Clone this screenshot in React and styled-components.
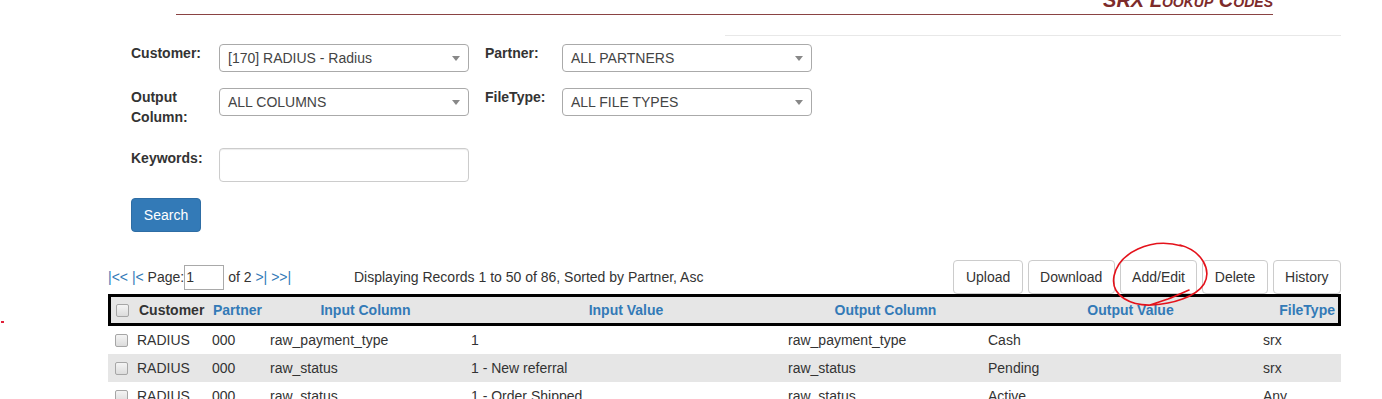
import React from 'react';
import styled, { createGlobalStyle } from 'styled-components';

const Global = createGlobalStyle`
  html, body { margin: 0; padding: 0; background: #fff; }
  body {
    font-family: "Liberation Sans", Arial, Helvetica, sans-serif;
    font-size: 14px;
    line-height: 20px;
    color: #333;
  }
  * { box-sizing: border-box; }
`;

const Page = styled.div`
  position: relative;
  width: 1382px;
  height: 399px;
  overflow: hidden;
`;

const TitleBar = styled.div`
  margin-left: 176px;
  width: 1097px;
  height: 15px;
  border-bottom: 1px solid #8a4343;
  display: flex;
  justify-content: flex-end;
  align-items: flex-end;
`;

const Title = styled.h1`
  margin: 0 0 4px 0;
  font-size: 20px;
  line-height: 20px;
  font-weight: bold;
  font-style: italic;
  font-variant: small-caps;
  color: #7d2b2b;
  white-space: nowrap;
`;

const Divider = styled.div`
  margin: 20px 0 0 725px;
  width: 616px;
  border-top: 1px solid #e8e8e8;
`;

const Form = styled.div`
  padding: 8px 0 0 131px;
`;

const FormRow = styled.div`
  display: flex;
  align-items: flex-start;
  margin-top: ${p => p.$mt || 0}px;
`;

const Label = styled.label`
  display: block;
  width: ${p => p.$w}px;
  margin-left: ${p => p.$ml || 0}px;
  margin-top: ${p => (p.$top != null ? p.$top : -1)}px;
  font-weight: bold;
  line-height: 20px;
  color: #333;
`;

const SelectBox = styled.div`
  position: relative;
  width: 250px;
  height: 28px;
  border: 1px solid #aaa;
  border-radius: 4px;
  padding: 0 8px;
  line-height: 26px;
  color: #444;
  background: #fff;
  white-space: nowrap;
  &::after {
    content: "";
    position: absolute;
    right: 8px;
    top: 11px;
    border-top: 5px solid #888;
    border-left: 4px solid transparent;
    border-right: 4px solid transparent;
  }
`;

const TextInput = styled.div`
  width: 250px;
  height: 34px;
  border: 1px solid #ccc;
  border-radius: 4px;
  background: #fff;
  box-shadow: inset 0 1px 1px rgba(0,0,0,0.075);
`;

const PrimaryButton = styled.button`
  display: block;
  margin-top: 16px;
  width: 70px;
  height: 34px;
  padding: 0;
  font-family: inherit;
  font-size: 14px;
  color: #fff;
  background: #337ab7;
  border: 1px solid #2e6da4;
  border-radius: 4px;
`;

const Toolbar = styled.div`
  position: relative;
  margin: 28px 0 0 108px;
  width: 1233px;
  height: 34px;
  display: flex;
  align-items: center;
`;

const Pager = styled.div`
  width: 246px;
  display: flex;
  align-items: center;
  white-space: pre;
`;

const PagerLink = styled.span`
  color: #337ab7;
`;

const PageInput = styled.div`
  width: 40px;
  height: 25px;
  margin: 0 4px 0 0;
  border: 1px solid #a9a9a9;
  padding: 0 1px;
  line-height: 23px;
  color: #333;
`;

const Status = styled.div`
  white-space: nowrap;
`;

const ButtonGroup = styled.div`
  margin-left: auto;
  display: flex;
  gap: 5px;
`;

const Button = styled.button`
  height: 34px;
  padding: 0 11.4px;
  font-family: inherit;
  font-size: 14px;
  color: #333;
  background: #fff;
  border: 1px solid #ccc;
  border-radius: 4px;
`;

const Table = styled.table`
  margin-left: 108px;
  width: 1233px;
  table-layout: fixed;
  border-collapse: separate;
  border-spacing: 0;
`;

const Th = styled.th`
  height: 32px;
  padding: 0 ${p => p.$pr || 5}px 0 ${p => p.$pl || 5}px;
  border-top: 3px solid #000;
  border-bottom: 3px solid #000;
  border-left: ${p => (p.$first ? '3px solid #000' : 'none')};
  border-right: ${p => (p.$last ? '3px solid #000' : 'none')};
  background: #e6e6e6;
  font-weight: bold;
  text-align: ${p => p.$align || 'left'};
  color: ${p => (p.$link ? '#337ab7' : '#333')};
  white-space: nowrap;
  overflow: hidden;
`;

const Tr = styled.tr`
  background: ${p => (p.$striped ? '#e6e6e6' : '#fff')};
`;

const Td = styled.td`
  height: 28px;
  padding: 0 0 0 ${p => p.$pl || 5}px;
  white-space: nowrap;
  overflow: hidden;
  color: #333;
`;

const Check = styled.span`
  display: inline-block;
  vertical-align: middle;
  width: 13px;
  height: 13px;
  margin-top: -2px;
  border: 1px solid #a6a6a6;
  border-radius: 2px;
  background: linear-gradient(#f4f4f4, #dcdcdc);
`;

const Annotation = styled.svg`
  position: absolute;
  left: 0;
  top: 0;
  pointer-events: none;
`;

const Dot = styled.span`
  position: absolute;
  left: 1px;
  top: 321px;
  width: 3px;
  height: 2px;
  background: #e0203a;
`;

const columns = [
  { key: 'cb', w: 24, pl: 5 },
  { key: 'customer', w: 75, label: 'Customer', pl: 7 },
  { key: 'partner', w: 58, label: 'Partner', link: true, pl: 6 },
  { key: 'inCol', w: 201, label: 'Input Column', link: true, align: 'center' },
  { key: 'inVal', w: 317, label: 'Input Value', link: true, align: 'center', pl: 8 },
  { key: 'outCol', w: 200, label: 'Output Column', link: true, align: 'center', pl: 10 },
  { key: 'outVal', w: 275, label: 'Output Value', link: true, align: 'center', pl: 25 },
  { key: 'fileType', w: 83, label: 'FileType', link: true, align: 'right', pr: 3 },
];

const rows = [
  ['RADIUS', '000', 'raw_payment_type', '1', 'raw_payment_type', 'Cash', 'srx'],
  ['RADIUS', '000', 'raw_status', '1 - New referral', 'raw_status', 'Pending', 'srx'],
  ['RADIUS', '000', 'raw_status', '1 - Order Shipped', 'raw_status', 'Active', 'Any'],
];

export default function App() {
  return (
    <Page>
      <Global />
      <TitleBar>
        <Title>SRX Lookup Codes</Title>
      </TitleBar>
      <Divider />
      <Form>
        <FormRow>
          <Label $w={88}>Customer:</Label>
          <SelectBox>[170] RADIUS - Radius</SelectBox>
          <Label $w={77} $ml={16}>Partner:</Label>
          <SelectBox>ALL PARTNERS</SelectBox>
        </FormRow>
        <FormRow $mt={16}>
          <Label $w={88}>Output<br />Column:</Label>
          <SelectBox>ALL COLUMNS</SelectBox>
          <Label $w={77} $ml={16}>FileType:</Label>
          <SelectBox>ALL FILE TYPES</SelectBox>
        </FormRow>
        <FormRow $mt={21}>
          <Label $w={88} $top={0}>Keywords:</Label>
          <TextInput />
        </FormRow>
        <PrimaryButton>Search</PrimaryButton>
      </Form>
      <Toolbar>
        <Pager>
          <PagerLink>|&lt;&lt; |&lt; </PagerLink>
          <span>Page:</span>
          <PageInput>1</PageInput>
          <span>of 2 </span>
          <PagerLink>&gt;| &gt;&gt;|</PagerLink>
        </Pager>
        <Status>Displaying Records 1 to 50 of 86, Sorted by Partner, Asc</Status>
        <ButtonGroup>
          <Button>Upload</Button>
          <Button>Download</Button>
          <Button>Add/Edit</Button>
          <Button>Delete</Button>
          <Button>History</Button>
        </ButtonGroup>
      </Toolbar>
      <Table>
        <colgroup>
          {columns.map(c => <col key={c.key} style={{ width: c.w }} />)}
        </colgroup>
        <thead>
          <tr>
            {columns.map((c, i) => (
              <Th
                key={c.key}
                $first={i === 0}
                $last={i === columns.length - 1}
                $link={c.link}
                $align={c.align}
                $pl={c.pl}
                $pr={c.pr}
              >
                {c.key === 'cb' ? <Check /> : c.label}
              </Th>
            ))}
          </tr>
        </thead>
        <tbody>
          {rows.map((r, ri) => (
            <Tr key={ri} $striped={ri % 2 === 1}>
              <Td $pl={7}><Check /></Td>
              {r.map((v, ci) => (
                <Td key={ci}>{v}</Td>
              ))}
            </Tr>
          ))}
        </tbody>
      </Table>
      <Dot />
      <Annotation width="1382" height="399" viewBox="0 0 1382 399">
        <path
          d="M1182 246 C1150 237 1119 253 1114 276 C1110 297 1133 306 1152 305 C1172 304 1196 297 1204 284 C1212 270 1202 251 1180 245 M1189 290 C1182 293 1176 296 1168 299 C1162 301 1156 303 1150 305"
          fill="none"
          stroke="#e4121b"
          strokeWidth="1.6"
          strokeLinecap="round"
        />
      </Annotation>
    </Page>
  );
}
